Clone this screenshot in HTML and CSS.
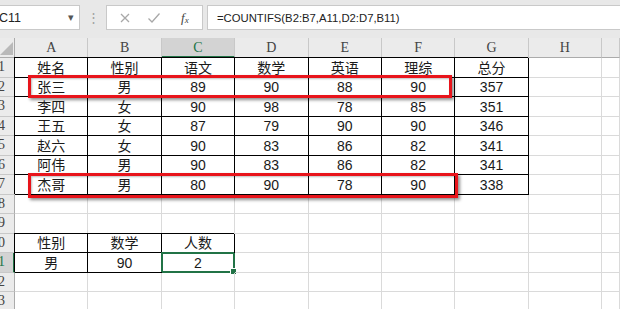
FILE: index.html
```html
<!DOCTYPE html>
<html>
<head>
<meta charset="utf-8">
<link rel="stylesheet" href="styles.css">
</head>
<body>
<div class="page">
  <div class="fbar">
    <div class="namebox"><span class="nbtext">C11</span><span class="nbarrow">&#9662;</span></div>
    <div class="dots">&#8942;</div>
    <div class="btns">
      <svg class="ic" width="12" height="12" viewBox="0 0 12 12"><path d="M2 2L10 10M10 2L2 10" stroke="#a8a8a8" stroke-width="1.3" fill="none"/></svg>
      <svg class="ic" width="14" height="12" viewBox="0 0 14 12"><path d="M1.5 6.5L5 10L12.5 1.5" stroke="#a8a8a8" stroke-width="1.3" fill="none"/></svg>
      <span class="fx">f<sub>x</sub></span>
    </div>
    <div class="formula">=COUNTIFS(B2:B7,A11,D2:D7,B11)</div>
  </div>
  <div class="gap"></div>
  <div class="sheet">
    <div class="corner"><svg width="13" height="13" viewBox="0 0 13 13"><path d="M13 0L13 13L0 13Z" fill="#b9b9b9"/></svg></div>
    <div class="ch">A</div><div class="ch">B</div><div class="ch csel">C</div><div class="ch">D</div><div class="ch">E</div><div class="ch">F</div><div class="ch">G</div><div class="ch">H</div><div class="ch"></div>

    <div class="rh">1</div>
    <div class="c t">姓名</div><div class="c t">性别</div><div class="c t">语文</div><div class="c t">数学</div><div class="c t">英语</div><div class="c t">理综</div><div class="c t">总分</div><div class="c"></div><div class="c"></div>

    <div class="rh">2</div>
    <div class="c t">张三</div><div class="c t">男</div><div class="c t">89</div><div class="c t">90</div><div class="c t">88</div><div class="c t">90</div><div class="c t">357</div><div class="c"></div><div class="c"></div>

    <div class="rh">3</div>
    <div class="c t">李四</div><div class="c t">女</div><div class="c t">90</div><div class="c t">98</div><div class="c t">78</div><div class="c t">85</div><div class="c t">351</div><div class="c"></div><div class="c"></div>

    <div class="rh">4</div>
    <div class="c t">王五</div><div class="c t">女</div><div class="c t">87</div><div class="c t">79</div><div class="c t">90</div><div class="c t">90</div><div class="c t">346</div><div class="c"></div><div class="c"></div>

    <div class="rh">5</div>
    <div class="c t">赵六</div><div class="c t">女</div><div class="c t">90</div><div class="c t">83</div><div class="c t">86</div><div class="c t">82</div><div class="c t">341</div><div class="c"></div><div class="c"></div>

    <div class="rh">6</div>
    <div class="c t">阿伟</div><div class="c t">男</div><div class="c t">90</div><div class="c t">83</div><div class="c t">86</div><div class="c t">82</div><div class="c t">341</div><div class="c"></div><div class="c"></div>

    <div class="rh">7</div>
    <div class="c t">杰哥</div><div class="c t">男</div><div class="c t">80</div><div class="c t">90</div><div class="c t">78</div><div class="c t">90</div><div class="c t">338</div><div class="c"></div><div class="c"></div>

    <div class="rh">8</div>
    <div class="c"></div><div class="c"></div><div class="c"></div><div class="c"></div><div class="c"></div><div class="c"></div><div class="c"></div><div class="c"></div><div class="c"></div>

    <div class="rh">9</div>
    <div class="c"></div><div class="c"></div><div class="c"></div><div class="c"></div><div class="c"></div><div class="c"></div><div class="c"></div><div class="c"></div><div class="c"></div>

    <div class="rh">10</div>
    <div class="c t">性别</div><div class="c t">数学</div><div class="c t">人数</div><div class="c"></div><div class="c"></div><div class="c"></div><div class="c"></div><div class="c"></div><div class="c"></div>

    <div class="rh rsel">11</div>
    <div class="c t">男</div><div class="c t">90</div><div class="c t sel">2<span class="handle"></span></div><div class="c"></div><div class="c"></div><div class="c"></div><div class="c"></div><div class="c"></div><div class="c"></div>

    <div class="rh">12</div>
    <div class="c"></div><div class="c"></div><div class="c"></div><div class="c"></div><div class="c"></div><div class="c"></div><div class="c"></div><div class="c"></div><div class="c"></div>

    <div class="rh">13</div>
    <div class="c"></div><div class="c"></div><div class="c"></div><div class="c"></div><div class="c"></div><div class="c"></div><div class="c"></div><div class="c"></div><div class="c"></div>
  </div>
  <div class="mark m1"></div>
  <div class="mark m2"></div>
</div>
</body>
</html>
```

FILE: styles.css
```css
html, body {
  margin: 0;
  padding: 0;
  background: #fff;
}
.page {
  position: relative;
  width: 620px;
  height: 309px;
  overflow: hidden;
  font-family: "Liberation Sans", "Noto Sans CJK SC", sans-serif;
}
.fbar {
  height: 37px;
  background: #e8e8e8;
  display: flex;
  align-items: flex-start;
  padding-top: 5px;
  box-sizing: border-box;
}
.namebox {
  width: 81px;
  height: 25px;
  margin-left: -1px;
  background: #fff;
  border: 1px solid #c9c9c9;
  box-sizing: border-box;
  display: flex;
  align-items: center;
  justify-content: space-between;
  font-size: 12.5px;
  color: #222;
}
.nbtext { margin-left: -1px; }
.nbarrow {
  font-size: 11px;
  color: #555;
  margin-right: 5px;
}
.dots {
  width: 26px;
  height: 25px;
  display: flex;
  align-items: center;
  justify-content: center;
  color: #a0a0a0;
  font-size: 13px;
}
.btns {
  width: 97px;
  height: 25px;
  background: #fff;
  border: 1px solid #c9c9c9;
  box-sizing: border-box;
  display: flex;
  align-items: center;
  padding-left: 12px;
  gap: 16px;
}
.fx {
  font-family: "Liberation Serif", serif;
  font-style: italic;
  font-size: 13px;
  color: #444;
  margin-left: 4px;
}
.fx sub { font-size: 9px; vertical-align: -1px; }
.formula {
  flex: 1;
  height: 25px;
  margin-left: 4px;
  margin-right: -2px;
  background: #fff;
  border: 1px solid #c9c9c9;
  box-sizing: border-box;
  display: flex;
  align-items: center;
  padding-left: 9px;
  font-size: 11.3px;
  color: #222;
}
.gap { height: 1px; background: #e8e8e8; }
.sheet {
  display: grid;
  grid-template-columns: 15px repeat(8, 73.4px) 1fr;
  grid-template-rows: 20px;
  grid-auto-rows: 19.5px;
}
.corner, .ch, .rh {
  background: #ebebeb;
  box-sizing: border-box;
  font-family: "Liberation Serif", serif;
  font-size: 14px;
  color: #444;
}
.corner {
  border-right: 1px solid #ababab;
  border-bottom: 1px solid #ababab;
  display: flex;
  align-items: flex-end;
  justify-content: flex-end;
  padding: 0 1px 2px 0;
}
.ch {
  border-right: 1px solid #c8c8c8;
  border-bottom: 1px solid #ababab;
  display: flex;
  align-items: center;
  justify-content: center;
  padding-top: 1px;
}
.csel {
  background: #d3d3d3;
  color: #217346;
  border-bottom: 2px solid #217346;
}
.rh {
  border-right: 1px solid #ababab;
  border-bottom: 1px solid #c8c8c8;
  display: flex;
  align-items: center;
  justify-content: flex-end;
  padding-right: 9px;
  white-space: nowrap;
  overflow: visible;
}
.rsel {
  background: #d3d3d3;
  color: #217346;
  border-right: 2px solid #217346;
  padding-right: 8px;
}
.c {
  box-sizing: border-box;
  border-right: 1px solid #dadada;
  border-bottom: 1px solid #dadada;
  display: flex;
  align-items: flex-end;
  justify-content: center;
  padding-bottom: 2px;
  font-size: 14px;
  line-height: 1;
  color: #1a1a1a;
  position: relative;
}
.t {
  border-right-color: #000;
  border-bottom-color: #000;
  box-shadow: -1px -1px 0 #000;
}
.sel {
  box-shadow: -1px -1px 0 #217346, inset 0 0 0 1px #217346;
  border-right-color: #217346;
  border-bottom-color: #217346;
}
.handle {
  position: absolute;
  right: -3px;
  bottom: -3px;
  width: 5px;
  height: 5px;
  background: #217346;
  border: 1px solid #fff;
}
.mark {
  position: absolute;
  border: 3px solid #e8141b;
  box-sizing: border-box;
  box-shadow: 2px 2px 3px rgba(0,0,0,0.45), inset 1px 1px 2px rgba(0,0,0,0.25);
}
.m1 { left: 28px; top: 75px; width: 424px; height: 23px; }
.m2 { left: 28px; top: 173px; width: 430px; height: 25px; }
```
